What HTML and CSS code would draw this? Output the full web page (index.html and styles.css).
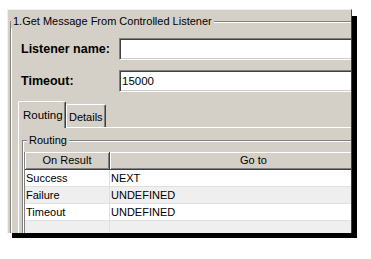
FILE: index.html
```html
<!DOCTYPE html>
<html>
<head>
<meta charset="utf-8">
<link rel="stylesheet" href="styles.css">
</head>
<body>
<div class="shadow">
<div class="win">
  <div class="grp">
    <span class="legend">1.Get Message From Controlled Listener</span>
    <div class="field">
      <span class="label">Listener name:</span>
      <div class="input"></div>
    </div>
    <div class="field">
      <span class="label">Timeout:</span>
      <div class="input">15000</div>
    </div>
    <div class="tabs">
      <div class="tab active">Routing</div>
      <div class="tab">Details</div>
    </div>
    <div class="tabpanel">
      <div class="grp2">
        <span class="legend legend2">Routing</span>
        <div class="tbl">
          <div class="thead">
            <div class="th c1">On Result</div>
            <div class="th c2">Go to</div>
          </div>
          <div class="tr">
            <div class="td c1">Success</div>
            <div class="td c2">NEXT</div>
          </div>
          <div class="tr alt">
            <div class="td c1">Failure</div>
            <div class="td c2">UNDEFINED</div>
          </div>
          <div class="tr">
            <div class="td c1">Timeout</div>
            <div class="td c2">UNDEFINED</div>
          </div>
          <div class="tr alt">
            <div class="td c1"></div>
            <div class="td c2"></div>
          </div>
        </div>
      </div>
    </div>
  </div>
</div>
</div>
</body>
</html>
```

FILE: styles.css
```css
* { box-sizing: border-box; }
html, body { margin: 0; background: #fff; }
body {
  padding: 9px 0 0 7px;
  font-family: "Liberation Sans", Arial, sans-serif;
  font-size: 11px;
  color: #000;
}
.shadow {
  width: 350px;
  height: 229px;
  background: #000;
  clip-path: polygon(0 0, 345px 0, 345px 7px, 350px 7px, 350px 229px, 5px 229px, 5px 224px, 0 224px);
}
.win {
  width: 345px;
  height: 224px;
  background: #d4d0c8;
  border-top: 1px solid #f1efeb;
  border-left: 1px solid #f1efeb;
  border-right: 1px solid #404040;
  overflow: hidden;
}
.grp {
  position: relative;
  margin: 11px 0 0 2px;
  width: 440px;
  height: 260px;
  border-top: 1px solid #808080;
  border-left: 1px solid #808080;
  box-shadow: inset 1px 1px 0 #fff;
  padding: 16px 0 0 10px;
}
.legend {
  position: absolute;
  top: -8px;
  left: 0;
  padding: 0 2px;
  line-height: 14px;
  background: #d4d0c8;
  white-space: nowrap;
}
.field {
  display: flex;
  align-items: center;
  height: 22px;
}
.field + .field { margin-top: 10px; }
.label {
  width: 98px;
  flex: none;
  font-weight: bold;
  font-size: 12.5px;
}
.input {
  flex: 1;
  height: 22px;
  background: #fff;
  border: 1px solid;
  border-color: #808080 #fff #fff #808080;
  box-shadow: inset 1px 1px 0 #404040, inset -1px -1px 0 #d4d0c8;
  padding: 0 0 0 2px;
  line-height: 20px;
  font-size: 11.5px;
}
.tabs {
  display: flex;
  align-items: flex-end;
  height: 26px;
  margin: 9px 0 0 -3px;
}
.tab {
  position: relative;
  z-index: 1;
  height: 23px;
  width: 40px;
  padding: 5px 0 0 2px;
  line-height: 14px;
  background: #d4d0c8;
  border-top: 1px solid #fff;
  border-left: 1px solid #fff;
  border-right: 1px solid #404040;
  box-shadow: inset -1px 0 0 #808080;
  border-top-left-radius: 2px;
  border-top-right-radius: 2px;
}
.tab.active {
  height: 27px;
  width: 48px;
  margin-bottom: -1px;
  padding: 6px 0 0 4px;
  z-index: 2;
  font-size: 11.5px;
}
.tabpanel {
  margin-left: -3px;
  height: 200px;
  border-top: 1px solid #fff;
  border-left: 1px solid #fff;
  padding: 12px 0 0 3px;
}
.grp2 {
  position: relative;
  height: 180px;
  border-top: 1px solid #808080;
  border-left: 1px solid #808080;
  box-shadow: inset 1px 1px 0 #fff;
  padding: 11px 0 0 1px;
}
.legend2 { left: 4px; }
.tbl {
  border-left: 1px solid #808080;
  width: 380px;
  height: 120px;
}
.thead { display: flex; }
.th {
  height: 18px;
  line-height: 16px;
  text-align: center;
  background: #d4d0c8;
  border-right: 1px solid #404040;
  border-bottom: 1px solid #404040;
  box-shadow: inset 1px 1px 0 #fff, inset -1px -1px 0 #808080;
}
.c1 { width: 85px; flex: none; }
.c2 { width: 288px; flex: none; }
.tr {
  display: flex;
  height: 17px;
  background: #fff;
  border-bottom: 1px solid #e2e0db;
}
.tr.alt { background: #efefef; }
.td {
  line-height: 16px;
  padding-left: 1px;
  white-space: nowrap;
}
.td.c1 { border-right: 1px solid #e2e0db; }
```
